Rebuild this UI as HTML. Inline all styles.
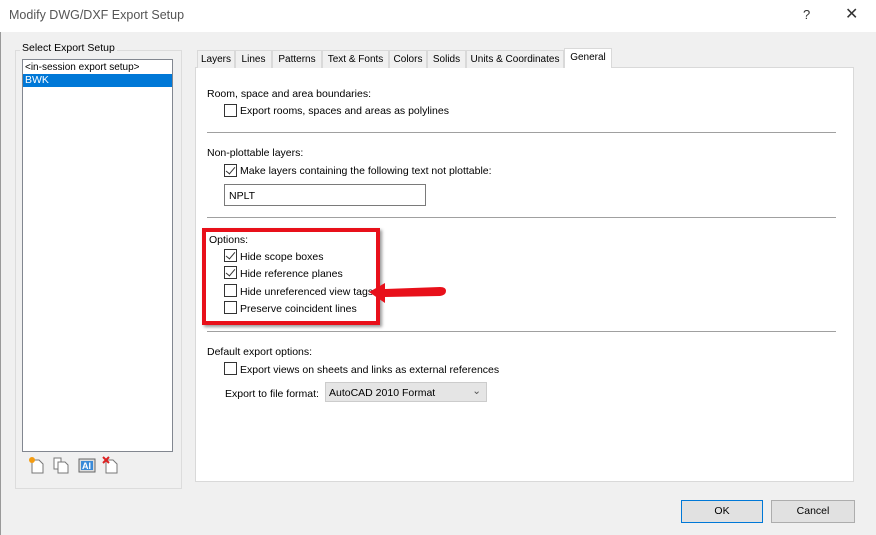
<!DOCTYPE html><html><head><style>
*{margin:0;padding:0;box-sizing:border-box}
body{width:876px;height:535px;background:#f0f0f0;font-family:"Liberation Sans",sans-serif;font-size:10.5px;color:#000;position:relative;overflow:hidden}
.a{position:absolute;white-space:nowrap}
.cb{position:absolute;width:13px;height:13px;border:1px solid #333;background:#fff}
.cb.c::after{content:"";position:absolute;left:3px;top:0px;width:4px;height:8px;border:solid #333;border-width:0 1.5px 1.5px 0;transform:rotate(40deg)}
.tab{position:absolute;top:50px;height:18px;border:1px solid #d9d9d9;border-bottom:none;background:#f0f0f0;padding:3px 0 0;text-align:center;white-space:nowrap;font-size:10px}
.hr{position:absolute;left:207px;width:629px;height:1px;background:#a0a0a0}
.btn{position:absolute;top:500px;height:23px;border:1px solid #adadad;background:#e1e1e1;text-align:center;line-height:21px}
</style></head><body>
<div class="a" style="left:0;top:0;width:876px;height:32px;background:#fff"></div>
<div class="a" style="left:9px;top:8px;font-size:12.5px;color:#555">Modify DWG/DXF Export Setup</div>
<div class="a" style="left:803px;top:7px;font-size:13px;color:#333">?</div>
<div class="a" style="left:845px;top:4px;font-size:16px;color:#333">✕</div>
<div class="a" style="left:0;top:32px;width:1px;height:503px;background:#999"></div>
<div class="a" style="left:15px;top:50px;width:167px;height:439px;border:1px solid #dcdcdc"></div>
<div class="a" style="left:20px;top:42px;background:#f0f0f0;padding:0 2px">Select Export Setup</div>
<div class="a" style="left:22px;top:59px;width:151px;height:393px;border:1px solid #828790;background:#fff"></div>
<div class="a" style="left:25px;top:62px;font-size:10px">&lt;in-session export setup&gt;</div>
<div class="a" style="left:23px;top:74px;width:149px;height:13px;background:#0078d7;color:#fff;padding-left:2px;line-height:13px">BWK</div>
<svg class="a" style="left:28px;top:456px" width="95" height="18">
<path d="M4 4h7l4 4v9H4z" fill="#fff" stroke="#777"/><circle cx="4" cy="4" r="3" fill="#f39c12"/>
<path d="M26 2h7v11h-7z" fill="#fff" stroke="#777"/><path d="M30 6h7l3 3v8H30z" fill="#fff" stroke="#777"/>
<rect x="51" y="3" width="16" height="13" fill="#ddd" stroke="#666"/><rect x="53" y="5" width="12" height="9" fill="#3a8ad8"/><text x="54" y="13" font-size="9" fill="#fff" font-family="Liberation Sans" font-weight="bold">AI</text>
<path d="M78 4h7l4 4v9H78z" fill="#fff" stroke="#777"/><path d="M75 1l6 6M81 1l-6 6" stroke="#d22" stroke-width="2"/>
</svg>
<div class="a" style="left:195px;top:67px;width:659px;height:415px;background:#fff;border:1px solid #d9d9d9"></div>
<div class="tab" style="left:197px;width:38px">Layers</div>
<div class="tab" style="left:235px;width:37px">Lines</div>
<div class="tab" style="left:272px;width:50px">Patterns</div>
<div class="tab" style="left:322px;width:67px">Text &amp; Fonts</div>
<div class="tab" style="left:389px;width:38px">Colors</div>
<div class="tab" style="left:427px;width:39px">Solids</div>
<div class="tab" style="left:466px;width:98px">Units &amp; Coordinates</div>
<div class="tab" style="left:564px;top:48px;height:20px;width:48px;background:#fff;padding-top:3px">General</div>
<div class="a" style="left:207px;top:88px">Room, space and area boundaries:</div>
<div class="cb" style="left:224px;top:104px"></div><div class="a" style="left:240px;top:105px">Export rooms, spaces and areas as polylines</div>
<div class="hr" style="top:132px"></div>
<div class="a" style="left:207px;top:147px">Non-plottable layers:</div>
<div class="cb c" style="left:224px;top:164px"></div><div class="a" style="left:240px;top:165px">Make layers containing the following text not plottable:</div>
<div class="a" style="left:224px;top:184px;width:202px;height:22px;border:1px solid #7a7a7a;background:#fff;padding:5px 0 0 4px">NPLT</div>
<div class="hr" style="top:217px"></div>
<div class="a" style="left:209px;top:234px">Options:</div>
<div class="cb c" style="left:224px;top:249px"></div><div class="a" style="left:240px;top:251px">Hide scope boxes</div>
<div class="cb c" style="left:224px;top:266px"></div><div class="a" style="left:240px;top:268px">Hide reference planes</div>
<div class="cb" style="left:224px;top:284px"></div><div class="a" style="left:240px;top:286px">Hide unreferenced view tags</div>
<div class="cb" style="left:224px;top:301px"></div><div class="a" style="left:240px;top:303px">Preserve coincident lines</div>
<div class="a" style="left:202px;top:228px;width:178px;height:97px;border:4px solid #e8101a;box-shadow:2px 2px 3px rgba(0,0,0,.4)"></div>
<svg class="a" style="left:365px;top:280px" width="90" height="25"><path d="M4 12L20 3v6l55-2q6 0 6 4q0 4-6 5L20 17v6z" fill="#e8101a"/></svg>
<div class="hr" style="top:331px"></div>
<div class="a" style="left:207px;top:346px">Default export options:</div>
<div class="cb" style="left:224px;top:362px"></div><div class="a" style="left:240px;top:364px">Export views on sheets and links as external references</div>
<div class="a" style="left:225px;top:388px">Export to file format:</div>
<div class="a" style="left:325px;top:382px;width:162px;height:20px;border:1px solid #ccc;background:#e5e5e5;padding:4px 0 0 3px">AutoCAD 2010 Format<span style="position:absolute;right:5px;top:2px;color:#555">⌄</span></div>
<div class="btn" style="left:681px;width:82px;border:1px solid #0078d7">OK</div>
<div class="btn" style="left:771px;width:84px">Cancel</div>
</body></html>
